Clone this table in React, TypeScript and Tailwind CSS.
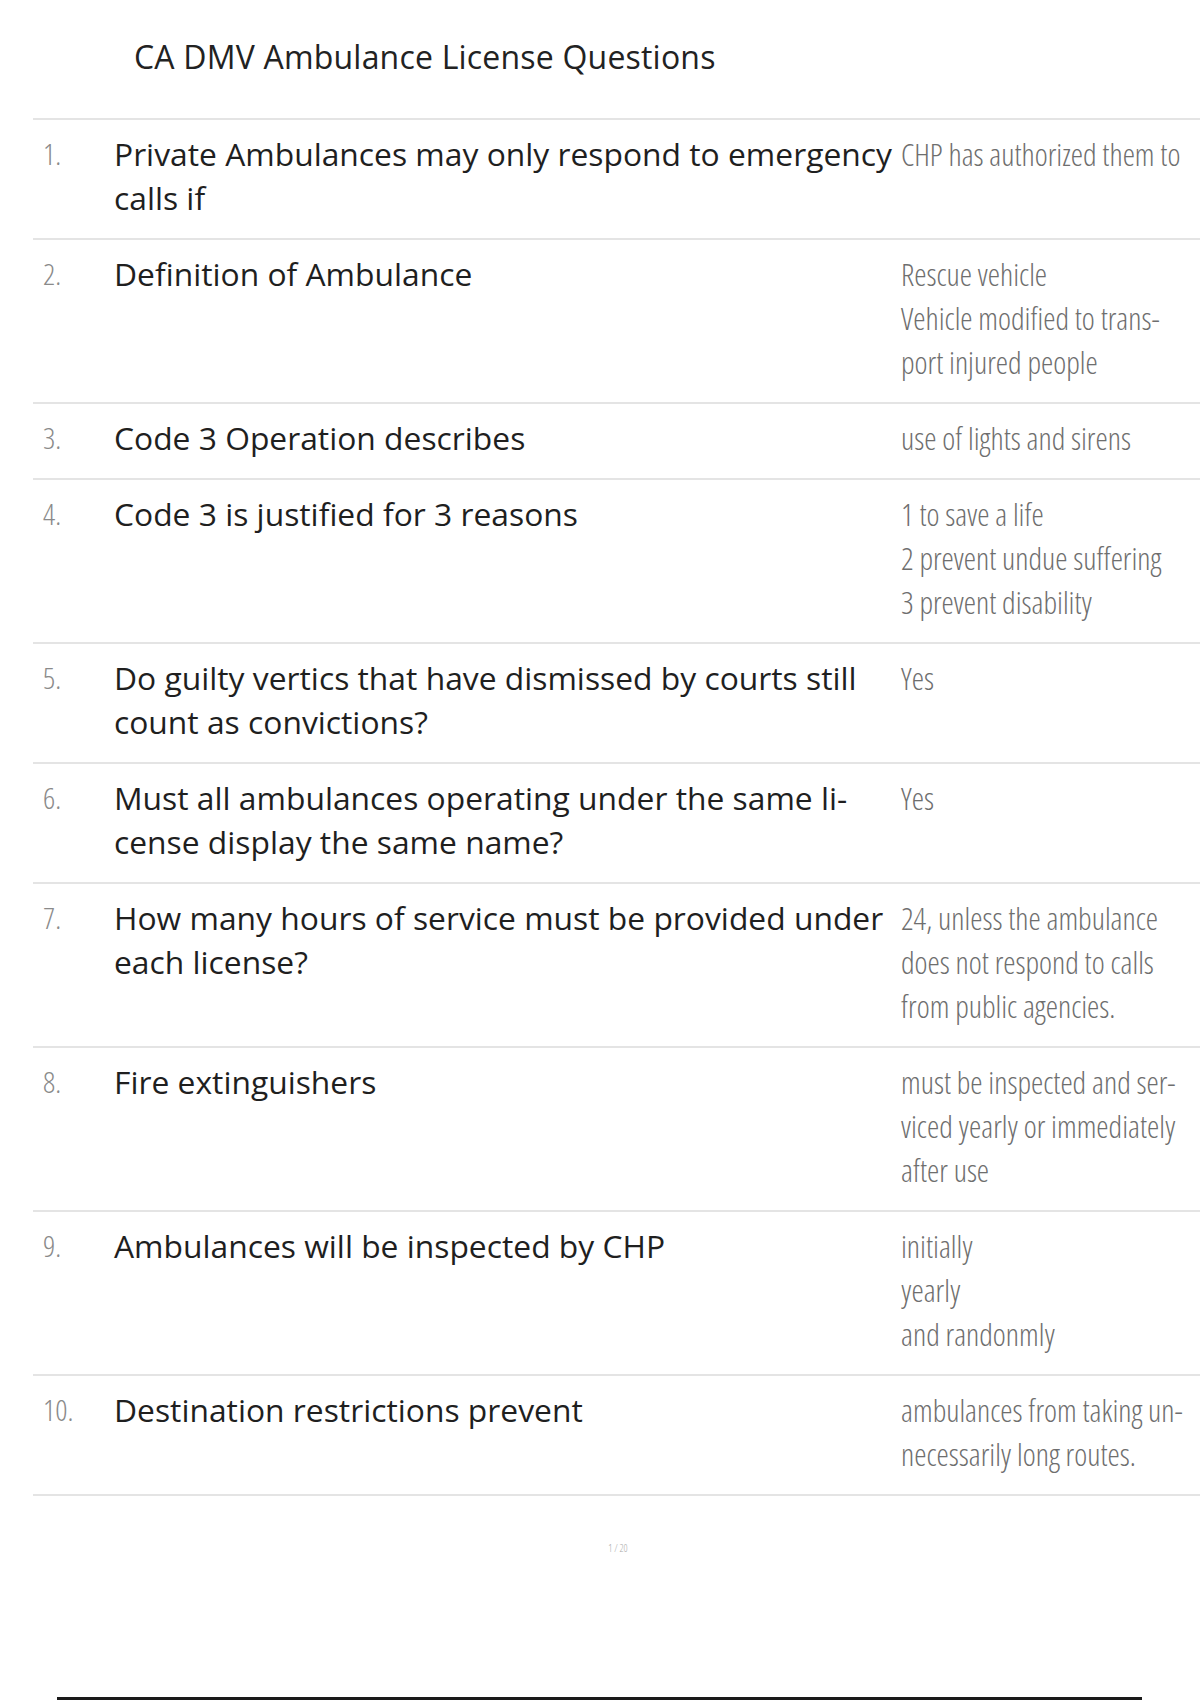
const rows: { q: string[]; a: string[] }[] = [
  { q: ["Private Ambulances may only respond to emergency", "calls if"], a: ["CHP has authorized them to"] },
  { q: ["Definition of Ambulance"], a: ["Rescue vehicle", "Vehicle modified to trans-", "port injured people"] },
  { q: ["Code 3 Operation describes"], a: ["use of lights and sirens"] },
  { q: ["Code 3 is justified for 3 reasons"], a: ["1 to save a life", "2 prevent undue suffering", "3 prevent disability"] },
  { q: ["Do guilty vertics that have dismissed by courts still", "count as convictions?"], a: ["Yes"] },
  { q: ["Must all ambulances operating under the same li-", "cense display the same name?"], a: ["Yes"] },
  {
    q: ["How many hours of service must be provided under", "each license?"],
    a: ["24, unless the ambulance", "does not respond to calls", "from public agencies."],
  },
  {
    q: ["Fire extinguishers"],
    a: ["must be inspected and ser-", "viced yearly or immediately", "after use"],
  },
  { q: ["Ambulances will be inspected by CHP"], a: ["initially", "yearly", "and randonmly"] },
  { q: ["Destination restrictions prevent"], a: ["ambulances from taking un-", "necessarily long routes."] },
];

const sans = "font-['Open_Sans','Noto_Sans',sans-serif]";
const narrow = "font-['Open_Sans','Noto_Sans',sans-serif] font-light font-stretch-condensed";

export default function App() {
  return (
    <div className="min-h-[1700px] bg-white flex flex-col">
      <h1 className={`${sans} pl-[134px] pt-[36px] text-[32px] leading-[42px] text-[#222] font-normal tracking-[0.2px]`}>
        CA DMV Ambulance License Questions
      </h1>

      <div className="ml-[33px] mt-[40px] border-t-2 border-[#e4e4e4]">
        {rows.map((row, i) => (
          <div key={i} className="flex border-b-2 border-[#e4e4e4] pt-[12px] pb-[18px]">
            <div className={`${narrow} w-[81px] pl-[10px] text-[30px] leading-[44px] text-[#8a8a8a]`}>
              {i + 1}.
            </div>
            <div className={`${sans} w-[787px] text-[31.8px] font-medium leading-[44px] text-[#1f1f1f] whitespace-nowrap`}>
              {row.q.map((l, j) => (
                <div key={j}>{l}</div>
              ))}
            </div>
            <div className={`${narrow} flex-1 text-[31px] leading-[44px] text-[#6e6e6e] whitespace-nowrap`}>
              {row.a.map((l, j) => (
                <div key={j}>{l}</div>
              ))}
            </div>
          </div>
        ))}
      </div>

      <div className={`${narrow} mt-[46px] text-center text-[10px] leading-[12px] text-[#aaa] pl-[36px]`}>1 / 20</div>

      <div className="mt-auto ml-[57px] w-[1085px] h-[3px] bg-[#1a1a1a]" />
    </div>
  );
}
